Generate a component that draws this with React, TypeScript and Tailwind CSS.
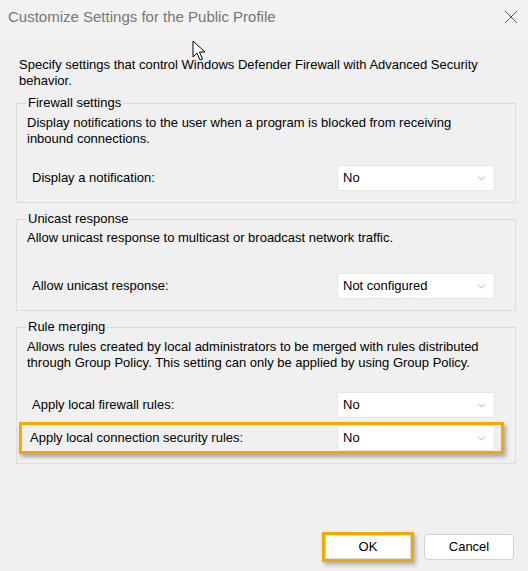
import React from 'react';

const FONT = { fontFamily: '"Liberation Sans", Arial, sans-serif' };

function Chevron() {
  return (
    <svg width="7" height="5" viewBox="0 0 7 5" className="shrink-0">
      <polyline points="0.5,1 3.5,3.8 6.5,1" fill="none" stroke="#a8a8a8" strokeWidth="1" />
    </svg>
  );
}

function Select({ value }: { value: string }) {
  return (
    <div className="flex h-[26px] w-[158px] items-center justify-between border border-[#e6e6e6] bg-white pr-[9px] pl-[5px] text-[13px] text-black">
      <span>{value}</span>
      <Chevron />
    </div>
  );
}

function Row({ label, value }: { label: string; value: string }) {
  return (
    <div className="flex h-[26px] items-center justify-between pl-[5px]">
      <span className="text-[13px] text-black">{label}</span>
      <Select value={value} />
    </div>
  );
}

function Group({
  title,
  className,
  children,
}: {
  title: string;
  className?: string;
  children: React.ReactNode;
}) {
  return (
    <fieldset
      className={`ml-[16px] w-[500px] border border-[#dcdcdc] pr-[20px] pl-[10px] ${className ?? ''}`}
    >
      <legend className="px-[1px] text-[13px] leading-[16px] text-black">{title}</legend>
      {children}
    </fieldset>
  );
}

function Cursor() {
  return (
    <svg
      width="14"
      height="22"
      viewBox="0 0 14 22"
      className="pointer-events-none absolute top-[40px] left-[192px]"
    >
      <path
        d="M1 1 L1 17 L5 13 L8 20 L10.5 19 L7.5 12 L13 12 Z"
        fill="white"
        stroke="black"
        strokeWidth="1"
        strokeLinejoin="round"
      />
    </svg>
  );
}

export default function App() {
  return (
    <div
      className="relative flex h-[571px] w-[528px] flex-col bg-[#f0f0f0]"
      style={FONT}
    >
      <div className="flex h-[34px] items-center justify-between bg-[#f2f2f2] pr-[10px] pl-[8px]">
        <span className="text-[15px] text-[#767676]">
          Customize Settings for the Public Profile
        </span>
        <svg width="14" height="14" viewBox="0 0 14 14">
          <path d="M1 1 L13 13 M13 1 L1 13" stroke="#5a5a5a" strokeWidth="1" />
        </svg>
      </div>

      <p className="mt-[23px] pr-[20px] pl-[19px] text-[13px] leading-[16px] text-black">
        Specify settings that control Windows Defender Firewall with Advanced Security
        behavior.
      </p>

      <Group title="Firewall settings" className="mt-[6px] pb-[11px]">
        <p className="mt-[4px] text-[13px] leading-[16px] text-black">
          Display notifications to the user when a program is blocked from receiving
          inbound connections.
        </p>
        <div className="mt-[18px]">
          <Row label="Display a notification:" value="No" />
        </div>
      </Group>

      <Group title="Unicast response" className="mt-[8px] pb-[11px]">
        <p className="mt-[3px] text-[13px] leading-[16px] text-black">
          Allow unicast response to multicast or broadcast network traffic.
        </p>
        <div className="mt-[27px]">
          <Row label="Allow unicast response:" value="Not configured" />
        </div>
      </Group>

      <Group title="Rule merging" className="mt-[8px] pb-[9px]">
        <p className="mt-[4px] text-[13px] leading-[16px] text-black">
          Allows rules created by local administrators to be merged with rules distributed
          through Group Policy. This setting can only be applied by using Group Policy.
        </p>
        <div className="mt-[21px]">
          <Row label="Apply local firewall rules:" value="No" />
        </div>
        <div className="mt-[4px] -mr-[9px] -ml-[8px] border-[3px] border-[#f5a800] pr-[6px] pl-[3px] shadow-[2px_3px_4px_rgba(0,0,0,0.3)]">
          <Row label="Apply local connection security rules:" value="No" />
        </div>
      </Group>

      <div className="flex-1" />

      <div className="flex items-center justify-end gap-[10px] pr-[14px] pb-[9px]">
        <div className="w-[92px] border-[3px] border-[#f5a800] shadow-[2px_3px_4px_rgba(0,0,0,0.25)]">
          <div className="flex h-[24px] items-center justify-center border border-[#dadada] bg-white text-[13px] text-black">
            OK
          </div>
        </div>
        <div className="flex h-[26px] w-[90px] items-center justify-center rounded-[4px] border border-[#d0d0d0] bg-white text-[13px] text-black">
          Cancel
        </div>
      </div>

      <Cursor />
    </div>
  );
}
